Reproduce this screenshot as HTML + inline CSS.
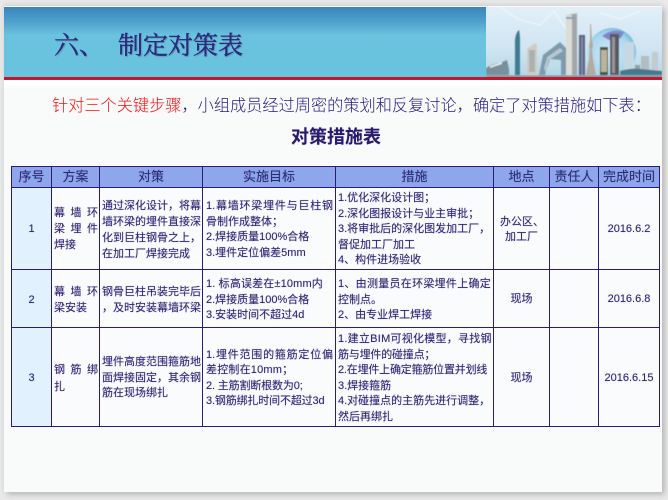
<!DOCTYPE html>
<html lang="zh"><head><meta charset="utf-8"><title>制定对策表</title>
<style>
html,body{margin:0;padding:0}
body{width:668px;height:500px;overflow:hidden;background:#e9e9e9;position:relative;font-family:"Liberation Sans","Noto Sans CJK SC",sans-serif;color:#2e2470}
#slide{position:absolute;left:4px;top:6px;width:658px;height:486px;background:#f9fbfb;box-shadow:3px 3px 5px #bdbdbd,0 -2px 5px #d6d6d6}
#head{position:absolute;left:4px;top:7px;width:658px;height:70px;background:linear-gradient(#3a85bd 0,#4f9fca 14px,#69c2de 28px,#69c3df 100%)}
#red{position:absolute;left:4px;top:77px;width:658px;height:3px;background:#c5152f}
#white{position:absolute;left:4px;top:80px;width:658px;height:9px;background:linear-gradient(#fff 40%,#f9fbfb)}
#sky{position:absolute;left:486px;top:7px}
.t{position:absolute;white-space:nowrap;line-height:16px;height:16px;font-size:11px;text-shadow:0 0 1px rgba(60,50,130,.4)}
.j{text-align:justify;text-align-last:justify;white-space:normal;overflow:hidden}
.c{text-align:center}
.h{font-size:13px;line-height:18px;height:18px;top:168px;color:#2a2a70}
.r{position:absolute;background:#2b1a78}
.b{position:absolute}
.ti{font-size:25px;height:34px;line-height:34px;top:27px;font-family:'Noto Serif CJK SC','Liberation Serif',serif;color:#2b2a7c;-webkit-text-stroke:.4px #2b2a7c;text-shadow:1px 1px 1px #5f8fb0}
</style></head><body>
<div id="slide"></div>
<div id="head"></div>
<svg id="sky" width="176" height="70" viewBox="486 7 176 70">
<defs><linearGradient id="g1" x1="0" y1="0" x2="0" y2="1"><stop offset="0" stop-color="#e2eff8"/><stop offset=".6" stop-color="#cfe5f2"/><stop offset="1" stop-color="#b4d6e6"/></linearGradient>
<radialGradient id="g2" cx=".45" cy=".55" r=".6"><stop offset="0" stop-color="#d6edf8"/><stop offset=".75" stop-color="#a8d6ee"/><stop offset="1" stop-color="#69b0dc"/></radialGradient>
<filter id="bl"><feGaussianBlur stdDeviation=".55"/></filter></defs>
<rect x="486" y="7" width="176" height="70" fill="url(#g1)"/>
<g filter="url(#bl)">
<path d="M500 7l18 12 22 6 14-14 16 24M600 13l20 6 20-8" stroke="#eef6fb" stroke-width="1.2" fill="none"/>
<circle cx="612" cy="52" r="24" fill="url(#g2)"/>
<path d="M602 36q10-8 22-4l-3 6-12 2z" fill="#7f86c8"/>
<path d="M486 68q8-5 14-5l7-3 2 9v6h-23z" fill="#7a8f9c"/>
<path d="M490 66l12-4v2l-12 4z" fill="#e4eaee"/>
<path d="M515 75V40q1-8 4-10 1 4 1 12v33z" fill="#3d7b92"/>
<path d="M527 49l8-6 2 2v30h-10z" fill="#d2cdc1"/>
<path d="M529 50h6v22h-6z" fill="#aab1b2"/>
<path d="M539 75l4-20 17-13 6 6v27h-5v-15l-11-1-5 16z" fill="#7e9bae"/>
<path d="M546 58l14-10 3 3-14 9zM544 68l3-10 2 1-3 14z" fill="#b7c8d2"/>
<path d="M566 15l11-2v62h-11z" fill="#c6c6c1"/>
<path d="M571 14h6v61h-6z" fill="#a3a6a8"/>
<path d="M566 15h6v60h-6z" fill="#dcdcd7"/>
<path d="M566 17h9v2h-9z" fill="#8aa0b6"/>
<path d="M579 35h6v40h-6z" fill="#5d6585"/>
<path d="M581 37h2v38h-2z" fill="#8287a0"/>
<path d="M590 24h1l1 16 1 6-1 3 1 10 3 16h-10l3-16 1-10-1-3 1-6z" fill="#b3aaa1"/>
<rect x="600" y="47" width="8" height="28" fill="#47524f"/><rect x="601" y="50" width="6" height="22" fill="#bcb49a"/>
<rect x="610" y="34" width="9" height="41" fill="#5a595e"/><rect x="612" y="37" width="3" height="36" fill="#96949a"/>
<rect x="624" y="42" width="10" height="30" fill="#c6d8e1"/>
<path d="M635 65h5v10h-5z" fill="#8fa3ac"/><rect x="641" y="56" width="8" height="18" fill="#b1bdc2"/><rect x="652" y="52" width="6" height="22" fill="#c4cbce"/>
<path d="M620 75v-4q10-3 20-2t22 2v4z" fill="#47788a"/>
<path d="M486 75.5h176v1.5h-176z" fill="#6a8c90"/>
</g>
</svg>
<div id="red"></div>
<div id="white"></div>

<div class="t ti" style="left:54px">六、</div>
<div class="t ti" style="left:118px">制定对策表</div>

<div class="t" style="left:52px;top:95px;height:22px;line-height:22px;font-size:16.2px;font-weight:300;color:#2a1a7e;text-shadow:none"><span style="color:#f01010">针对三个关键步骤</span>，小组成员经过周密的策划和反复讨论，确定了对策措施如下表：</div>
<div class="t" style="left:291px;top:125px;height:24px;line-height:24px;font-size:18px;font-weight:bold;color:#2a1a6e">对策措施表</div>

<!-- table fills -->
<div class="b" style="left:11px;top:166px;width:649px;height:260px;background:#f9fbfd"></div>
<div class="b" style="left:11px;top:166px;width:649px;height:21px;background:#8ea7ec"></div>
<div class="b" style="left:12px;top:188px;width:39px;height:238px;background:#e1f2fe"></div>
<!-- horizontal rules -->
<div class="r" style="left:11px;top:166px;width:649px;height:1px"></div>
<div class="r" style="left:11px;top:187px;width:649px;height:1px"></div>
<div class="r" style="left:11px;top:269px;width:649px;height:1px"></div>
<div class="r" style="left:11px;top:327px;width:649px;height:1px"></div>
<div class="r" style="left:11px;top:426px;width:649px;height:1px"></div>
<!-- vertical rules -->
<div class="r" style="left:11px;top:166px;width:1px;height:261px"></div>
<div class="r" style="left:51px;top:166px;width:1px;height:261px"></div>
<div class="r" style="left:99px;top:166px;width:1px;height:261px"></div>
<div class="r" style="left:202px;top:166px;width:1px;height:261px"></div>
<div class="r" style="left:335px;top:166px;width:1px;height:261px"></div>
<div class="r" style="left:493px;top:166px;width:1px;height:261px"></div>
<div class="r" style="left:549px;top:166px;width:1px;height:261px"></div>
<div class="r" style="left:598px;top:166px;width:1px;height:261px"></div>
<div class="r" style="left:659px;top:166px;width:1px;height:261px"></div>

<!-- header -->
<div class="t h c" style="left:12px;width:39px">序号</div>
<div class="t h c" style="left:52px;width:47px">方案</div>
<div class="t h c" style="left:100px;width:102px">对策</div>
<div class="t h c" style="left:203px;width:132px">实施目标</div>
<div class="t h c" style="left:336px;width:157px">措施</div>
<div class="t h c" style="left:494px;width:55px">地点</div>
<div class="t h c" style="left:550px;width:48px">责任人</div>
<div class="t h c" style="left:599px;width:60px">完成时间</div>

<!-- row 1 -->
<div class="t c" style="left:12px;width:39px;top:221px">1</div>
<div class="t j" style="left:54px;width:44px;top:205px">幕 墙 环</div>
<div class="t j" style="left:54px;width:44px;top:221px">梁 埋 件</div>
<div class="t" style="left:54px;top:237px">焊接</div>
<div class="t j" style="left:102px;width:99px;top:198px">通过深化设计，将幕</div>
<div class="t j" style="left:102px;width:99px;top:214px">墙环梁的埋件直接深</div>
<div class="t j" style="left:102px;width:99px;top:230px">化到巨柱钢骨之上，</div>
<div class="t" style="left:102px;top:246px">在加工厂焊接完成</div>
<div class="t j" style="left:206px;width:127px;top:198px">1.幕墙环梁埋件与巨柱钢</div>
<div class="t" style="left:206px;top:214px">骨制作成整体；</div>
<div class="t" style="left:206px;top:229px">2.焊接质量100%合格</div>
<div class="t" style="left:206px;top:245px">3.埋件定位偏差5mm</div>
<div class="t" style="left:338px;top:190px">1.优化深化设计图；</div>
<div class="t" style="left:338px;top:206px">2.深化图报设计与业主审批；</div>
<div class="t" style="left:338px;top:221px">3.将审批后的深化图发加工厂，</div>
<div class="t" style="left:338px;top:237px">督促加工厂加工</div>
<div class="t" style="left:338px;top:252px">4、构件进场验收</div>
<div class="t" style="left:500px;top:214px">办公区、</div>
<div class="t" style="left:505px;top:229px">加工厂</div>
<div class="t c" style="left:599px;width:60px;top:221px">2016.6.2</div>

<!-- row 2 -->
<div class="t c" style="left:12px;width:39px;top:292px">2</div>
<div class="t j" style="left:54px;width:44px;top:284px">幕 墙 环</div>
<div class="t" style="left:54px;top:300px">梁安装</div>
<div class="t j" style="left:102px;width:99px;top:284px">钢骨巨柱吊装完毕后</div>
<div class="t j" style="left:102px;width:99px;top:300px">，及时安装幕墙环梁</div>
<div class="t" style="left:206px;top:276px;letter-spacing:.15px">1. 标高误差在±10mm内</div>
<div class="t" style="left:206px;top:292px">2.焊接质量100%合格</div>
<div class="t" style="left:206px;top:307px">3.安装时间不超过4d</div>
<div class="t" style="left:338px;top:276px;letter-spacing:.28px">1、由测量员在环梁埋件上确定</div>
<div class="t" style="left:338px;top:292px">控制点。</div>
<div class="t" style="left:338px;top:307px">2、由专业焊工焊接</div>
<div class="t c" style="left:494px;width:55px;top:291px">现场</div>
<div class="t c" style="left:599px;width:60px;top:291px">2016.6.8</div>

<!-- row 3 -->
<div class="t c" style="left:12px;width:39px;top:370px">3</div>
<div class="t j" style="left:54px;width:44px;top:362px">钢 筋 绑</div>
<div class="t" style="left:54px;top:379px">扎</div>
<div class="t j" style="left:102px;width:99px;top:354px">埋件高度范围箍筋地</div>
<div class="t j" style="left:102px;width:99px;top:370px">面焊接固定，其余钢</div>
<div class="t" style="left:102px;top:385px">筋在现场绑扎</div>
<div class="t j" style="left:206px;width:127px;top:347px">1.埋件范围的箍筋定位偏</div>
<div class="t" style="left:206px;top:362px;letter-spacing:.2px">差控制在10mm；</div>
<div class="t" style="left:206px;top:378px;letter-spacing:-.15px">2. 主筋割断根数为0;</div>
<div class="t" style="left:206px;top:393px;letter-spacing:-.15px">3.钢筋绑扎时间不超过3d</div>
<div class="t" style="left:338px;top:331px;letter-spacing:.25px">1.建立BIM可视化模型，寻找钢</div>
<div class="t" style="left:338px;top:347px;letter-spacing:-.2px">筋与埋件的碰撞点；</div>
<div class="t" style="left:338px;top:362px;letter-spacing:-.2px">2.在埋件上确定箍筋位置并划线</div>
<div class="t" style="left:338px;top:378px">3.焊接箍筋</div>
<div class="t" style="left:338px;top:393px">4.对碰撞点的主筋先进行调整，</div>
<div class="t" style="left:338px;top:409px">然后再绑扎</div>
<div class="t c" style="left:494px;width:55px;top:370px">现场</div>
<div class="t c" style="left:599px;width:60px;top:370px">2016.6.15</div>
</body></html>
